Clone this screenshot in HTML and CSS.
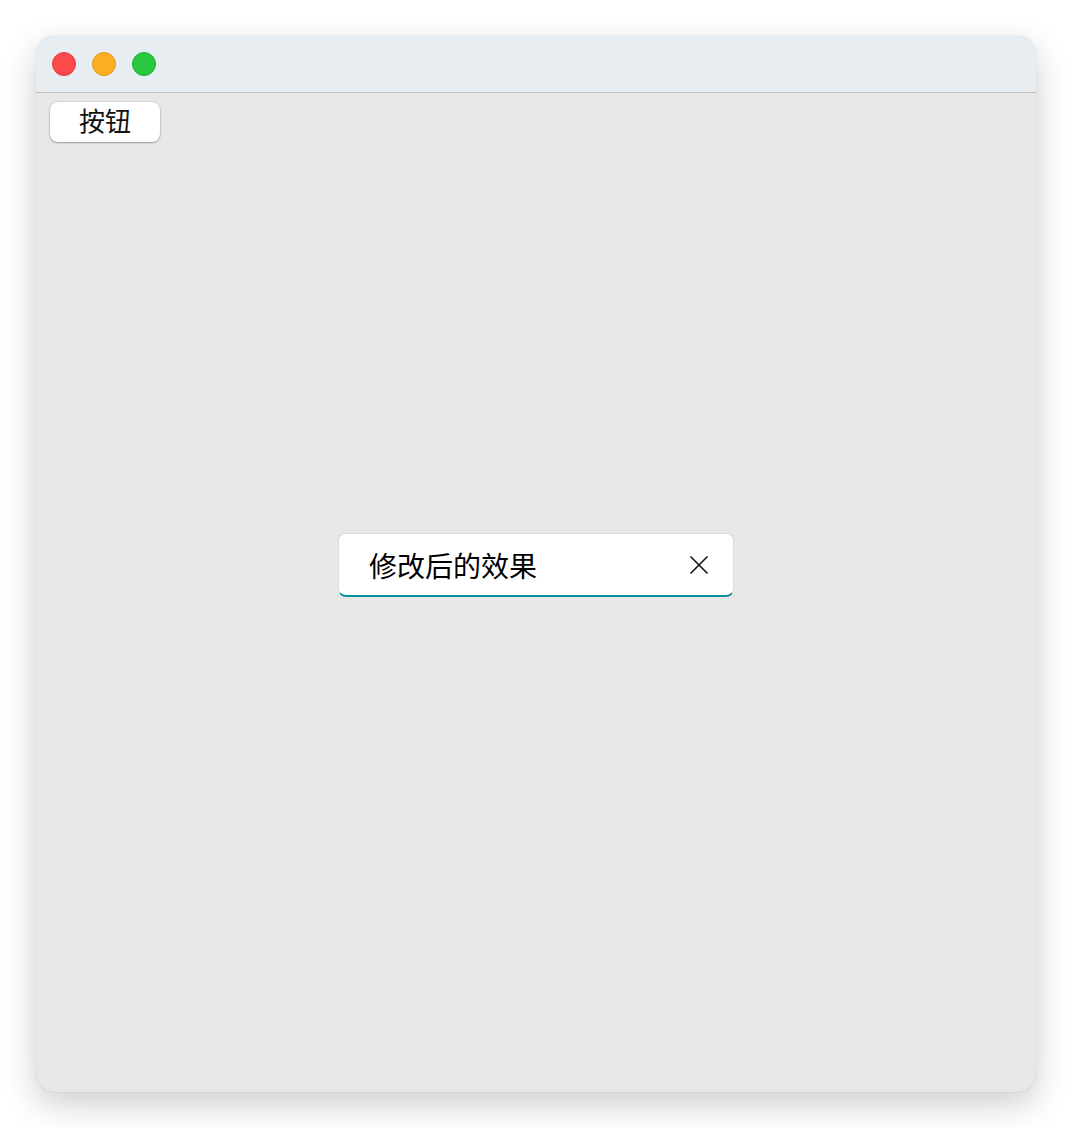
FILE: index.html
```html
<!doctype html>
<html lang="zh">
<head>
  <meta charset="UTF-8">
  <meta name="viewport" content="width=device-width, initial-scale=1.0">
  <title>文本框</title>
  <link rel="stylesheet" href="styles.css">
</head>
<body>
  <div class="window">
    <div class="titlebar">
      <span class="light red"></span>
      <span class="light yellow"></span>
      <span class="light green"></span>
    </div>
    <div class="content">
      <div class="toolbar">
        <button class="btn" type="button">按钮</button>
      </div>
      <div class="stage">
        <div class="field">
          <input class="field-input" type="text" value="修改后的效果">
          <button class="field-clear" type="button" aria-label="清除">
            <svg viewBox="0 0 20 20">
              <path d="M1.5 1.5L18.5 18.5M18.5 1.5L1.5 18.5"/>
            </svg>
          </button>
        </div>
      </div>
    </div>
  </div>
</body>
</html>
```

FILE: styles.css
```css
:root {
  --window-bg: #e7e7e7;
  --title-bg: #e8edf1;
  --accent: #0a8f9f;
  --text: #111111;
}

* {
  box-sizing: border-box;
  margin: 0;
  padding: 0;
}

body {
  font-family: "Noto Sans CJK SC", "Noto Sans", sans-serif;
  background: #ffffff;
  width: 1072px;
  height: 1128px;
  padding: 36px;
}

.window {
  width: 1000px;
  height: 1056px;
  background: var(--window-bg);
  border-radius: 18px;
  box-shadow: 0 12px 34px rgba(0, 0, 0, 0.2), 0 0 1px rgba(0, 0, 0, 0.25);
  overflow: hidden;
  display: flex;
  flex-direction: column;
}

.titlebar {
  height: 57px;
  background: var(--title-bg);
  border-bottom: 1px solid #c2c2c2;
  display: flex;
  align-items: center;
  gap: 16px;
  padding: 0 0 1px 16px;
}

.light {
  width: 24px;
  height: 24px;
  border-radius: 50%;
}

.red {
  background: #fe4a4d;
  border: 1px solid #e2393b;
}

.yellow {
  background: #fdaf24;
  border: 1px solid #e09a1a;
}

.green {
  background: #28c73f;
  border: 1px solid #1fad33;
}

.content {
  flex: 1;
  display: flex;
  flex-direction: column;
}

.toolbar {
  padding: 9px 14px 0;
}

.btn {
  width: 110px;
  height: 40px;
  background: #ffffff;
  border: none;
  border-radius: 8px;
  box-shadow: 0 1px 2px rgba(0, 0, 0, 0.3), 0 0 0 0.5px rgba(0, 0, 0, 0.12);
  font-family: inherit;
  font-size: 26px;
  line-height: 36px;
  padding-bottom: 4px;
  color: var(--text);
  cursor: pointer;
}

.stage {
  flex: 1;
  display: flex;
  align-items: center;
  justify-content: center;
  padding-bottom: 104px;
}

.field {
  width: 396px;
  height: 64px;
  background: #ffffff;
  border-radius: 8px;
  border: 1px solid #dcdcdc;
  border-bottom: 2px solid var(--accent);
  display: flex;
  align-items: center;
  padding: 0 24px 0 30px;
}

.field-input {
  flex: 1;
  min-width: 0;
  border: none;
  outline: none;
  background: transparent;
  font-family: inherit;
  font-size: 28px;
  color: #000000;
}

.field-clear {
  width: 20px;
  height: 20px;
  border: none;
  background: none;
  cursor: pointer;
  display: flex;
}

.field-clear svg {
  width: 20px;
  height: 20px;
  stroke: #111111;
  stroke-width: 1.6;
  fill: none;
}
```
